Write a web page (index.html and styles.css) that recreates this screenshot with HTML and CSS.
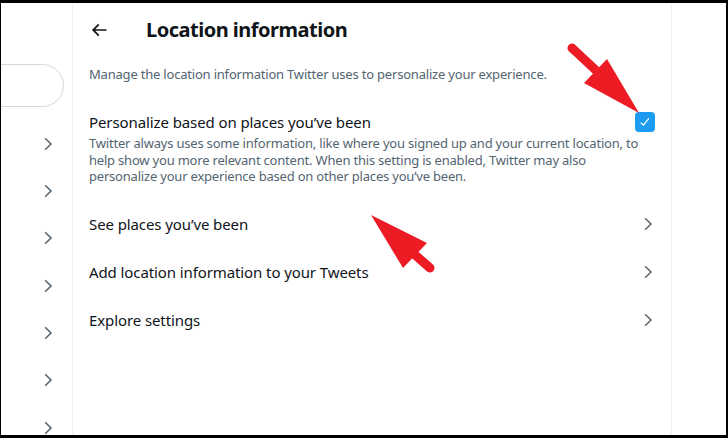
FILE: index.html
```html
<!DOCTYPE html>
<html lang="en">
<head>
    <meta charset="UTF-8">
    <meta name="viewport" content="width=device-width, initial-scale=1.0">
    <title>Location information</title>
    <link rel="stylesheet" href="styles.css">
</head>
<body>
    <div class="frame">
        <div class="sidebar">
            <div class="search-pill"></div>
            <div class="side-list">
                <div class="side-row"><svg class="chev" viewBox="0 0 24 24"><path d="M14.586 12L7.543 4.96l1.414-1.42L17.414 12l-8.457 8.46-1.414-1.42L14.586 12z"/></svg></div>
                <div class="side-row"><svg class="chev" viewBox="0 0 24 24"><path d="M14.586 12L7.543 4.96l1.414-1.42L17.414 12l-8.457 8.46-1.414-1.42L14.586 12z"/></svg></div>
                <div class="side-row"><svg class="chev" viewBox="0 0 24 24"><path d="M14.586 12L7.543 4.96l1.414-1.42L17.414 12l-8.457 8.46-1.414-1.42L14.586 12z"/></svg></div>
                <div class="side-row"><svg class="chev" viewBox="0 0 24 24"><path d="M14.586 12L7.543 4.96l1.414-1.42L17.414 12l-8.457 8.46-1.414-1.42L14.586 12z"/></svg></div>
                <div class="side-row"><svg class="chev" viewBox="0 0 24 24"><path d="M14.586 12L7.543 4.96l1.414-1.42L17.414 12l-8.457 8.46-1.414-1.42L14.586 12z"/></svg></div>
                <div class="side-row"><svg class="chev" viewBox="0 0 24 24"><path d="M14.586 12L7.543 4.96l1.414-1.42L17.414 12l-8.457 8.46-1.414-1.42L14.586 12z"/></svg></div>
                <div class="side-row"><svg class="chev" viewBox="0 0 24 24"><path d="M14.586 12L7.543 4.96l1.414-1.42L17.414 12l-8.457 8.46-1.414-1.42L14.586 12z"/></svg></div>
            </div>
        </div>

        <main class="main">
            <header class="header">
                <svg class="back" viewBox="0 0 24 24"><path d="M7.414 13l5.043 5.04-1.414 1.42L3.586 12l7.457-7.46 1.414 1.42L7.414 11H21v2H7.414z"/></svg>
                <h1>Location information</h1>
            </header>
            <p class="intro">Manage the location information Twitter uses to personalize your experience.</p>

            <div class="option">
                <div class="option-head">
                    <span class="option-title">Personalize based on places you’ve been</span>
                    <span class="checkbox">
                        <svg viewBox="0 0 24 24"><path d="M9.64 18.952l-5.55-4.861 1.317-1.504 3.951 3.459 8.459-10.948L19.4 6.32 9.64 18.952z"/></svg>
                    </span>
                </div>
                <p class="option-note">Twitter always uses some information, like where you signed up and your current location, to help show you more relevant content. When this setting is enabled, Twitter may also personalize your experience based on other places you’ve been.</p>
            </div>

            <div class="link-row">
                <span>See places you’ve been</span>
                <svg class="chev" viewBox="0 0 24 24"><path d="M14.586 12L7.543 4.96l1.414-1.42L17.414 12l-8.457 8.46-1.414-1.42L14.586 12z"/></svg>
            </div>
            <div class="link-row">
                <span>Add location information to your Tweets</span>
                <svg class="chev" viewBox="0 0 24 24"><path d="M14.586 12L7.543 4.96l1.414-1.42L17.414 12l-8.457 8.46-1.414-1.42L14.586 12z"/></svg>
            </div>
            <div class="link-row">
                <span>Explore settings</span>
                <svg class="chev" viewBox="0 0 24 24"><path d="M14.586 12L7.543 4.96l1.414-1.42L17.414 12l-8.457 8.46-1.414-1.42L14.586 12z"/></svg>
            </div>
        </main>

        <aside class="aside"></aside>

        <!-- red pointer arrows drawn on top -->
        <svg class="marks" viewBox="0 0 728 438">
            <line x1="572" y1="48" x2="602" y2="76" class="shaft"/>
            <polygon points="639,113 584,83 607,59"/>
            <line x1="430" y1="268" x2="405" y2="246" class="shaft"/>
            <polygon points="371,215 427,243 403,268"/>
        </svg>
    </div>
</body>
</html>
```

FILE: styles.css
```css
* {
    box-sizing: border-box;
}

body {
    margin: 0;
    font-family: "Noto Sans", Arial, sans-serif;
    color: #0f1419;
    background-color: #000;
}

.frame {
    position: relative;
    display: flex;
    width: 728px;
    height: 438px;
    overflow: hidden;
    background-color: #fff;
    border-style: solid;
    border-color: #000;
    border-width: 3px 2px 3px 1px;
}

/* left settings column, mostly cut off */
.sidebar {
    width: 71px;
    flex-shrink: 0;
    padding-top: 61px;
}

.search-pill {
    height: 43px;
    margin-left: -60px;
    margin-right: 8px;
    border: 1px solid #cfd9de;
    border-radius: 22px;
}

.side-list {
    margin-top: 13px;
}

.side-row {
    height: 47.33px;
    display: flex;
    align-items: center;
    justify-content: flex-end;
    padding-right: 15px;
}

.chev {
    width: 18px;
    height: 18px;
    fill: #536471;
}

.main {
    width: 600px;
    flex-shrink: 0;
    border-left: 1px solid #eff3f4;
    border-right: 1px solid #eff3f4;
}

.header {
    height: 53px;
    display: flex;
    align-items: center;
    padding: 0 16px;
}

.back {
    width: 20px;
    height: 20px;
    fill: #0f1419;
    margin-right: 37px;
}

.header h1 {
    margin: 0;
    font-size: 20px;
    font-weight: 700;
    line-height: 24px;
    letter-spacing: -0.5px;
}

.intro {
    margin: 0;
    padding: 10px 16px 30px;
    font-size: 13px;
    line-height: 16px;
    letter-spacing: -0.2px;
    color: #536471;
}

.option {
    padding: 0 16px 15px;
}

.option-head {
    display: flex;
    align-items: center;
    justify-content: space-between;
    height: 20px;
}

.option-title {
    font-size: 15px;
    line-height: 20px;
    letter-spacing: -0.1px;
}

.checkbox {
    width: 20px;
    height: 20px;
    border-radius: 4px;
    background-color: #1d9bf0;
    display: flex;
    align-items: center;
    justify-content: center;
}

.checkbox svg {
    width: 14px;
    height: 14px;
    fill: #fff;
}

.option-note {
    margin: 3px 10px 0 0;
    font-size: 13px;
    line-height: 16.5px;
    letter-spacing: -0.2px;
    color: #536471;
}

.link-row {
    height: 48px;
    display: flex;
    align-items: center;
    justify-content: space-between;
    padding: 0 16px;
    font-size: 15px;
    letter-spacing: -0.1px;
}

.link-row .chev {
    margin-right: -2px;
}

.aside {
    flex: 1;
}

.marks {
    position: absolute;
    top: -3px;
    left: -1px;
    width: 728px;
    height: 438px;
    fill: #ed1c24;
}

.marks .shaft {
    stroke: #ed1c24;
    stroke-width: 9;
    stroke-linecap: round;
}
```
